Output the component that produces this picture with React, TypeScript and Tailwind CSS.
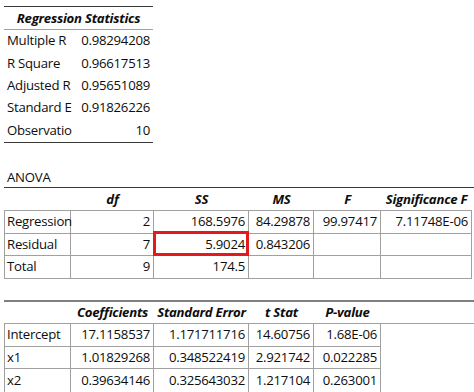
const font = { fontFamily: '"Open Sans", Lato, sans-serif' };

const stats: [string, string][] = [
  ['Multiple R', '0.98294208'],
  ['R Square', '0.96617513'],
  ['Adjusted R', '0.95651089'],
  ['Standard E', '0.91826226'],
  ['Observatio', '10'],
];

const anova: string[][] = [
  ['Regression', '2', '168.5976', '84.29878', '99.97417', '7.11748E-06'],
  ['Residual', '7', '5.9024', '0.843206', '', ''],
  ['Total', '9', '174.5', '', '', ''],
];

const coefs: string[][] = [
  ['Intercept', '17.1158537', '1.171711716', '14.60756', '1.68E-06'],
  ['x1', '1.01829268', '0.348522419', '2.921742', '0.022285'],
  ['x2', '0.39634146', '0.325643032', '1.217104', '0.263001'],
];

const widths = ['w-[66px]', 'w-[83px]', 'w-[95px]', 'w-[65px]', 'w-[67px]', 'w-[91px]'];
const rowH = ['h-[23px]', 'h-[22px]', 'h-[23px]'];

export default function App() {
  return (
    <div className="w-[474px] h-[392px] bg-white text-[#0d0d0d] text-[13.2px] tracking-[-0.25px] overflow-hidden" style={font}>
      <div className="pt-[6px] pl-[4px]">
        {/* Regression Statistics */}
        <div className="w-[149px] border-t border-b border-[#3a3a3a]">
          <div className="h-[23px] border-b border-[#a0a0a0] flex items-center justify-center font-bold italic pt-[2px]">
            Regression Statistics
          </div>
          {stats.map(([k, v]) => (
            <div key={k} className="h-[22.4px] flex items-center">
              <div className="w-[66px] pl-[3px] whitespace-nowrap">{k}</div>
              <div className="flex-1 text-right pr-[3px]">{v}</div>
            </div>
          ))}
        </div>

        <div className="mt-[26px] h-[18px] flex items-center pl-[3px]">ANOVA</div>

        {/* ANOVA */}
        <div className="w-[470px] border-t border-[#3a3a3a]">
          <div className="h-[23px] flex items-center font-bold italic border-b border-[#a0a0a0] w-[468px] pt-[2px]">
            {['', 'df', 'SS', 'MS', 'F', 'Significance F'].map((h, i) => (
              <div key={i} className={`${widths[i]} text-center whitespace-nowrap ${i === 0 ? 'ml-[1px]' : ''}`}>{h}</div>
            ))}
          </div>
          <div className="w-[468px] border-l border-[#a0a0a0]">
            {anova.map((r, ri) => (
              <div key={ri} className={`${rowH[ri]} flex border-b border-[#a0a0a0]`}>
                {r.map((c, ci) => (
                  <div
                    key={ci}
                    className={`${widths[ci]} border-r border-[#a0a0a0] flex items-center whitespace-nowrap ${ci === 0 ? 'pl-[2px]' : 'justify-end pr-[3px]'} relative`}
                  >
                    {c}
                    {ri === 1 && ci === 2 && (
                      <div className="absolute left-[-1px] right-[-1px] top-[-3px] bottom-[-1px] border-[3px] border-[#e3191b]" />
                    )}
                  </div>
                ))}
              </div>
            ))}
          </div>
        </div>

        {/* Coefficients */}
        <div className="mt-[21px] w-[470px] border-t-2 border-[#7f7f7f]">
          <div className="h-[21px] flex items-center font-bold italic pt-[1px]">
            {['', 'Coefficients', 'Standard Error', 't Stat', 'P-value'].map((h, i) => (
              <div key={i} className={`${widths[i]} text-center whitespace-nowrap ${i === 0 ? 'ml-[1px]' : ''}`}>{h}</div>
            ))}
          </div>
          <div className="flex border-t border-b-2 border-[#a0a0a0] border-b-[#8a8a8a]">
            <div className="w-[377px] border-l border-[#a0a0a0]">
              {coefs.map((r, ri) => (
                <div key={ri} className={`${rowH[ri]} flex ${ri < 2 ? 'border-b border-[#a0a0a0]' : ''}`}>
                  {r.map((c, ci) => (
                    <div
                      key={ci}
                      className={`${widths[ci]} border-r border-[#a0a0a0] flex items-center whitespace-nowrap ${ci === 0 ? 'pl-[2px]' : 'justify-end pr-[3px]'}`}
                    >
                      {c}
                    </div>
                  ))}
                </div>
              ))}
            </div>
            <div className="flex-1" />
          </div>
        </div>
      </div>
    </div>
  );
}
